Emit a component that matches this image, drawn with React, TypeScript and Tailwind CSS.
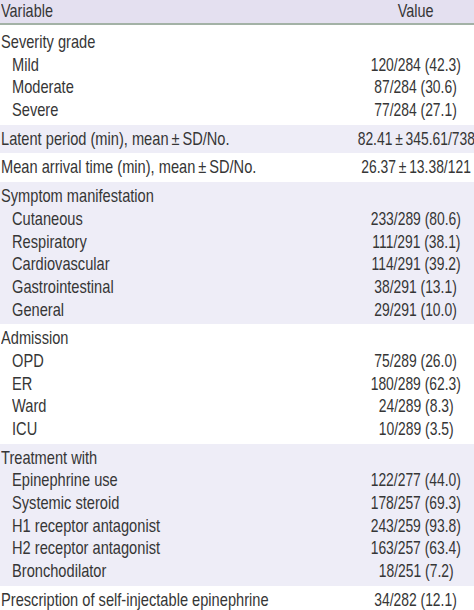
type Row = { label: string; value?: string; sub?: boolean }
type Group = { shaded: boolean; rows: Row[] }

const groups: Group[] = [
  {
    shaded: false,
    rows: [
      { label: 'Severity grade' },
      { label: 'Mild', value: '120/284 (42.3)', sub: true },
      { label: 'Moderate', value: '87/284 (30.6)', sub: true },
      { label: 'Severe', value: '77/284 (27.1)', sub: true },
    ],
  },
  {
    shaded: true,
    rows: [{ label: 'Latent period (min), mean\u2009±\u2009SD/No.', value: '82.41\u2009±\u2009345.61/738' }],
  },
  {
    shaded: false,
    rows: [{ label: 'Mean arrival time (min), mean\u2009±\u2009SD/No.', value: '26.37\u2009±\u200913.38/121' }],
  },
  {
    shaded: true,
    rows: [
      { label: 'Symptom manifestation' },
      { label: 'Cutaneous', value: '233/289 (80.6)', sub: true },
      { label: 'Respiratory', value: '111/291 (38.1)', sub: true },
      { label: 'Cardiovascular', value: '114/291 (39.2)', sub: true },
      { label: 'Gastrointestinal', value: '38/291 (13.1)', sub: true },
      { label: 'General', value: '29/291 (10.0)', sub: true },
    ],
  },
  {
    shaded: false,
    rows: [
      { label: 'Admission' },
      { label: 'OPD', value: '75/289 (26.0)', sub: true },
      { label: 'ER', value: '180/289 (62.3)', sub: true },
      { label: 'Ward', value: '24/289 (8.3)', sub: true },
      { label: 'ICU', value: '10/289 (3.5)', sub: true },
    ],
  },
  {
    shaded: true,
    rows: [
      { label: 'Treatment with' },
      { label: 'Epinephrine use', value: '122/277 (44.0)', sub: true },
      { label: 'Systemic steroid', value: '178/257 (69.3)', sub: true },
      { label: 'H1 receptor antagonist', value: '243/259 (93.8)', sub: true },
      { label: 'H2 receptor antagonist', value: '163/257 (63.4)', sub: true },
      { label: 'Bronchodilator', value: '18/251 (7.2)', sub: true },
    ],
  },
  {
    shaded: false,
    rows: [{ label: 'Prescription of self-injectable epinephrine', value: '34/282 (12.1)' }],
  },
]

const font = { fontFamily: '"Liberation Sans", Arial, sans-serif' }

export default function App() {
  return (
    <div
      className="h-[610px] w-[474px] overflow-hidden bg-white text-[19px] leading-[22.7px] text-[#363636]"
      style={font}
    >
      <div className="flex h-[25px] items-center border-b-2 border-[#a3b2a6] bg-[#e4e0f0]">
        <div className="w-[358px] shrink-0 pl-[1px]">
          <span className="inline-block origin-left scale-x-[0.76]">Variable</span>
        </div>
        <div className="flex min-w-0 flex-1 justify-center">
          <span className="inline-block scale-x-[0.76]">Value</span>
        </div>
      </div>
      {groups.map((g, i) => (
        <div
          key={i}
          className={`${i === 0 ? 'pt-[6px]' : 'pt-[3px]'} pb-[3px] ${g.shaded ? 'bg-[#eeedf7]' : 'bg-white'}`}
        >
          {g.rows.map((r) => (
            <div key={r.label} className="flex h-[22.7px] whitespace-nowrap">
              <div className={`w-[358px] shrink-0 ${r.sub ? 'pl-[12px]' : 'pl-[1px]'}`}>
                <span className="inline-block origin-left scale-x-[0.77]">{r.label}</span>
              </div>
              <div className="flex min-w-0 flex-1 justify-center">
                {r.value && <span className="inline-block shrink-0 scale-x-[0.73]">{r.value}</span>}
              </div>
            </div>
          ))}
        </div>
      ))}
    </div>
  )
}
